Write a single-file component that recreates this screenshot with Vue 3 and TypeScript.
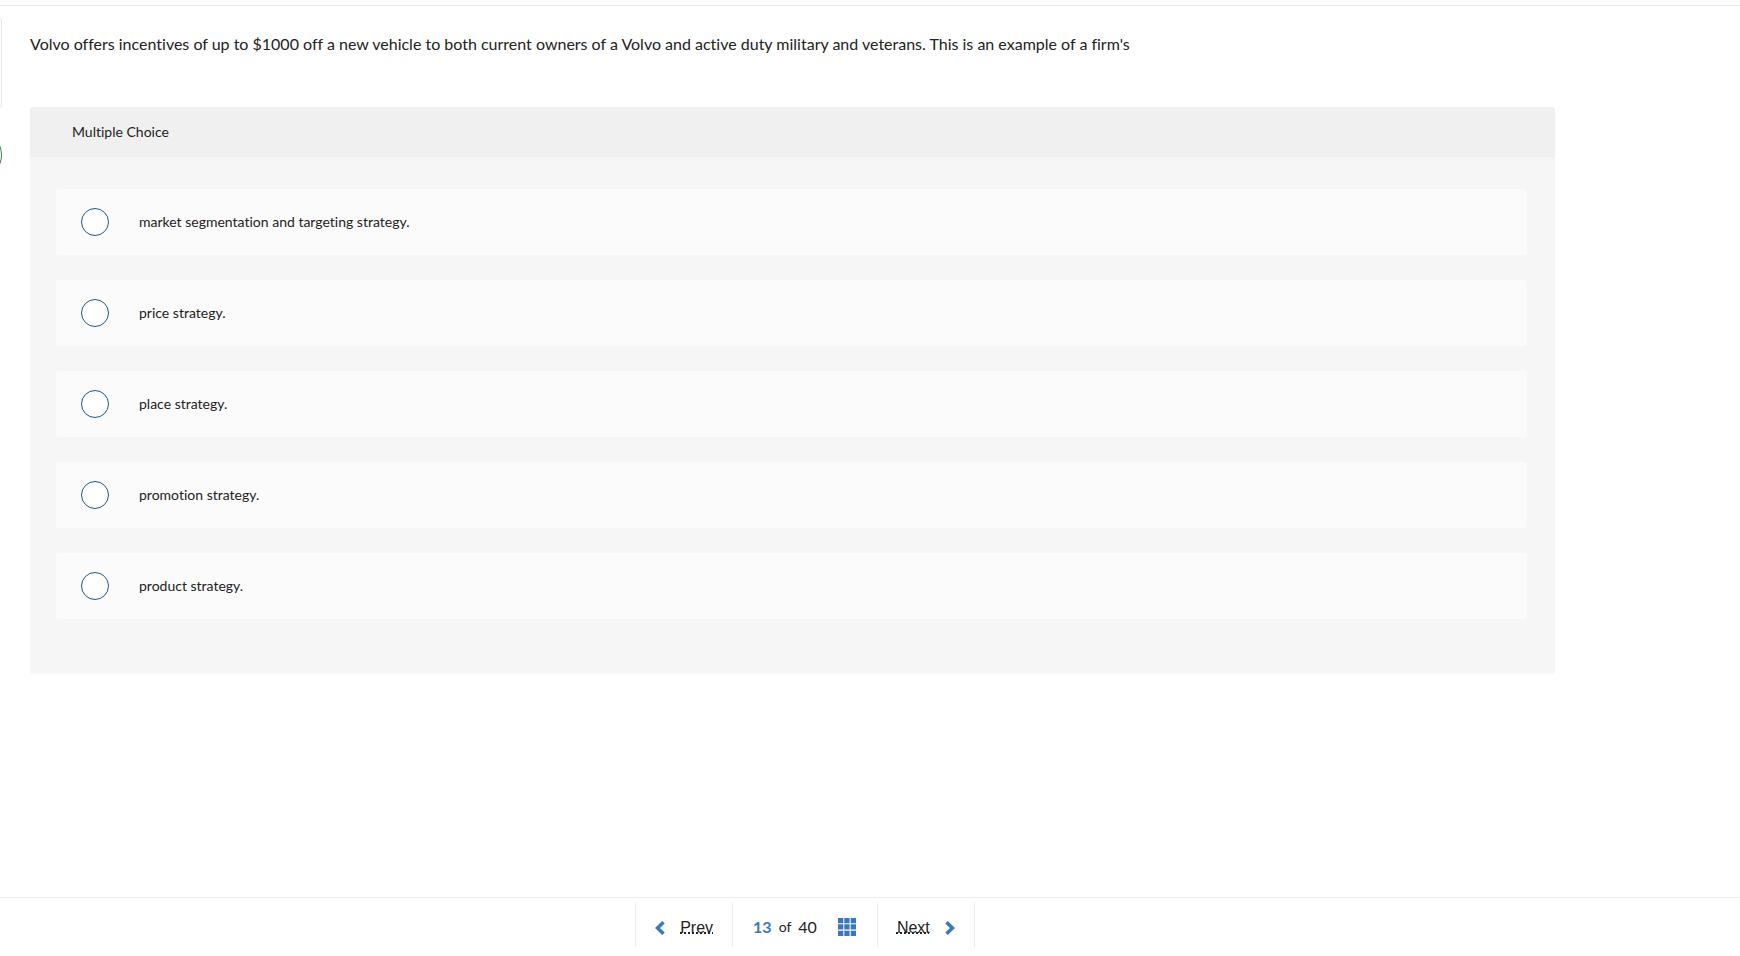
<script setup lang="ts">
import { ref } from 'vue'

const choices: string[] = [
  'market segmentation and targeting strategy.',
  'price strategy.',
  'place strategy.',
  'promotion strategy.',
  'product strategy.',
]

const selected = ref<number | null>(null)
const current = ref<number>(13)
const total = 40

function go(step: number): void {
  current.value = Math.min(total, Math.max(1, current.value + step))
  selected.value = null
}
</script>

<template>
  <div class="page">
    <header class="topbar"></header>
    <div class="body">
      <aside class="rail">
        <div class="rail-card"></div>
        <div class="rail-badge"></div>
      </aside>
      <main class="content">
        <p class="question">
          Volvo offers incentives of up to $1000 off a new vehicle to both current owners of a Volvo and active duty military and veterans. This is an example of a firm's
        </p>
        <fieldset class="panel" aria-labelledby="panel-title">
          <div id="panel-title" class="panel-title">Multiple Choice</div>
          <div class="choices">
            <label v-for="(choice, i) in choices" :key="i" class="choice" :for="`choice-${i}`">
              <input :id="`choice-${i}`" v-model="selected" class="radio" type="radio" name="answer" :value="i" />
              <span>{{ choice }}</span>
            </label>
          </div>
        </fieldset>
      </main>
    </div>
    <footer class="footer">
      <nav class="pager" aria-label="Question navigation">
        <button class="step" type="button" @click="go(-1)">
          <svg class="chevron" viewBox="0 0 10 14" aria-hidden="true"><path d="M8.500 1.200 2.500 7l6 5.800" /></svg>
          <span class="step-text">Prev</span>
        </button>
        <div class="status">
          <span class="current">{{ current }}</span>
          <span class="of">of</span>
          <span class="total">{{ total }}</span>
          <button class="grid-button" type="button" aria-label="All questions">
            <svg class="grid-icon" viewBox="0 0 18 18" aria-hidden="true">
              <path d="M0 0h5.300v5.300H0zM6.300 0h5.300v5.300H6.300zM12.700 0H18v5.300h-5.300zM0 6.300h5.300v5.300H0zM6.300 6.300h5.300v5.300H6.300zM12.700 6.300H18v5.300h-5.300zM0 12.700h5.300V18H0zM6.300 12.700h5.300V18H6.300zM12.700 12.700H18V18h-5.300z" />
            </svg>
          </button>
        </div>
        <button class="step" type="button" @click="go(1)">
          <span class="step-text">Next</span>
          <svg class="chevron" viewBox="0 0 10 14" aria-hidden="true"><path d="M1.500 1.200 7.500 7l-6 5.800" /></svg>
        </button>
      </nav>
    </footer>
  </div>
</template>

<style>
body {
  margin: 0;
  background: #fff;
}
</style>

<style scoped>
* {
  box-sizing: border-box;
}

.page {
  display: flex;
  flex-direction: column;
  min-height: 100vh;
  color: #222;
  font-family: Lato, "Liberation Sans", sans-serif;
  font-size: 14px;
  font-variant-ligatures: none;
}

.topbar {
  height: 6px;
  background: #fcfcfc;
  border-bottom: 1px solid #ececec;
}

.body {
  display: flex;
  flex: 1;
}

.rail {
  display: flex;
  flex-direction: column;
  align-items: flex-end;
  gap: 22px;
  width: 2px;
  padding-top: 12px;
  overflow: hidden;
}

.rail-card {
  flex: none;
  width: 40px;
  height: 90px;
  border: 1px solid #e6e6e6;
  border-radius: 3px;
}

.rail-badge {
  flex: none;
  width: 50px;
  height: 50px;
  border: 1px solid #3f8040;
  border-radius: 50%;
}

.content {
  flex: 1;
  padding: 27px 185px 40px 28px;
}

.question {
  margin: 0 0 52px;
  font-size: 16px;
  line-height: 22px;
}

.panel {
  min-width: 0;
  margin: 0;
  padding: 0;
  border: 0;
  border-radius: 3px;
  overflow: hidden;
  background: #f6f6f6;
}

.panel-title {
  padding: 0 42px;
  background: #f0f0f0;
  line-height: 50px;
}

.choices {
  display: flex;
  flex-direction: column;
  gap: 25px;
  padding: 32px 28px 55px 26px;
}

.choice {
  display: flex;
  align-items: center;
  gap: 30px;
  min-height: 66px;
  padding: 0 25px;
  border-radius: 3px;
  background: #fbfbfb;
  line-height: 20px;
  cursor: pointer;
}

.radio {
  flex: none;
  appearance: none;
  width: 28px;
  height: 28px;
  margin: 0;
  border: 1px solid #1f5688;
  border-radius: 50%;
  background: #fff;
}

.radio:checked {
  background: #1f5688;
  box-shadow: inset 0 0 0 6px #fff;
}

.footer {
  display: flex;
  justify-content: center;
  padding: 5px 130px 9px 0;
  border-top: 1px solid #ececec;
}

.pager {
  display: flex;
  height: 44px;
  border-right: 1px solid #ececec;
}

.step,
.status {
  display: flex;
  align-items: center;
  border: 0;
  border-left: 1px solid #ececec;
  background: none;
  color: inherit;
}

.step {
  gap: 15px;
  padding: 5px 19px 0;
  font: 16px/20px "Liberation Sans", Arial, sans-serif;
  cursor: pointer;
}

.step-text {
  text-decoration: underline dotted 2px;
  text-underline-offset: 0;
  text-decoration-skip-ink: none;
}

.chevron {
  width: 10px;
  height: 14px;
  fill: none;
  stroke: #3b78bb;
  stroke-width: 3.500;
}

.status {
  gap: 7px;
  padding: 4px 21px 0 20px;
  font-size: 16px;
  line-height: 20px;
}

.current {
  color: #3b78bb;
  font-weight: 700;
}

.of {
  font-size: 14px;
}

.grid-button {
  display: flex;
  margin-left: 14px;
  padding: 0;
  border: 0;
  background: none;
  cursor: pointer;
}

.grid-icon {
  width: 18px;
  height: 18px;
  fill: #3b78bb;
}
</style>
